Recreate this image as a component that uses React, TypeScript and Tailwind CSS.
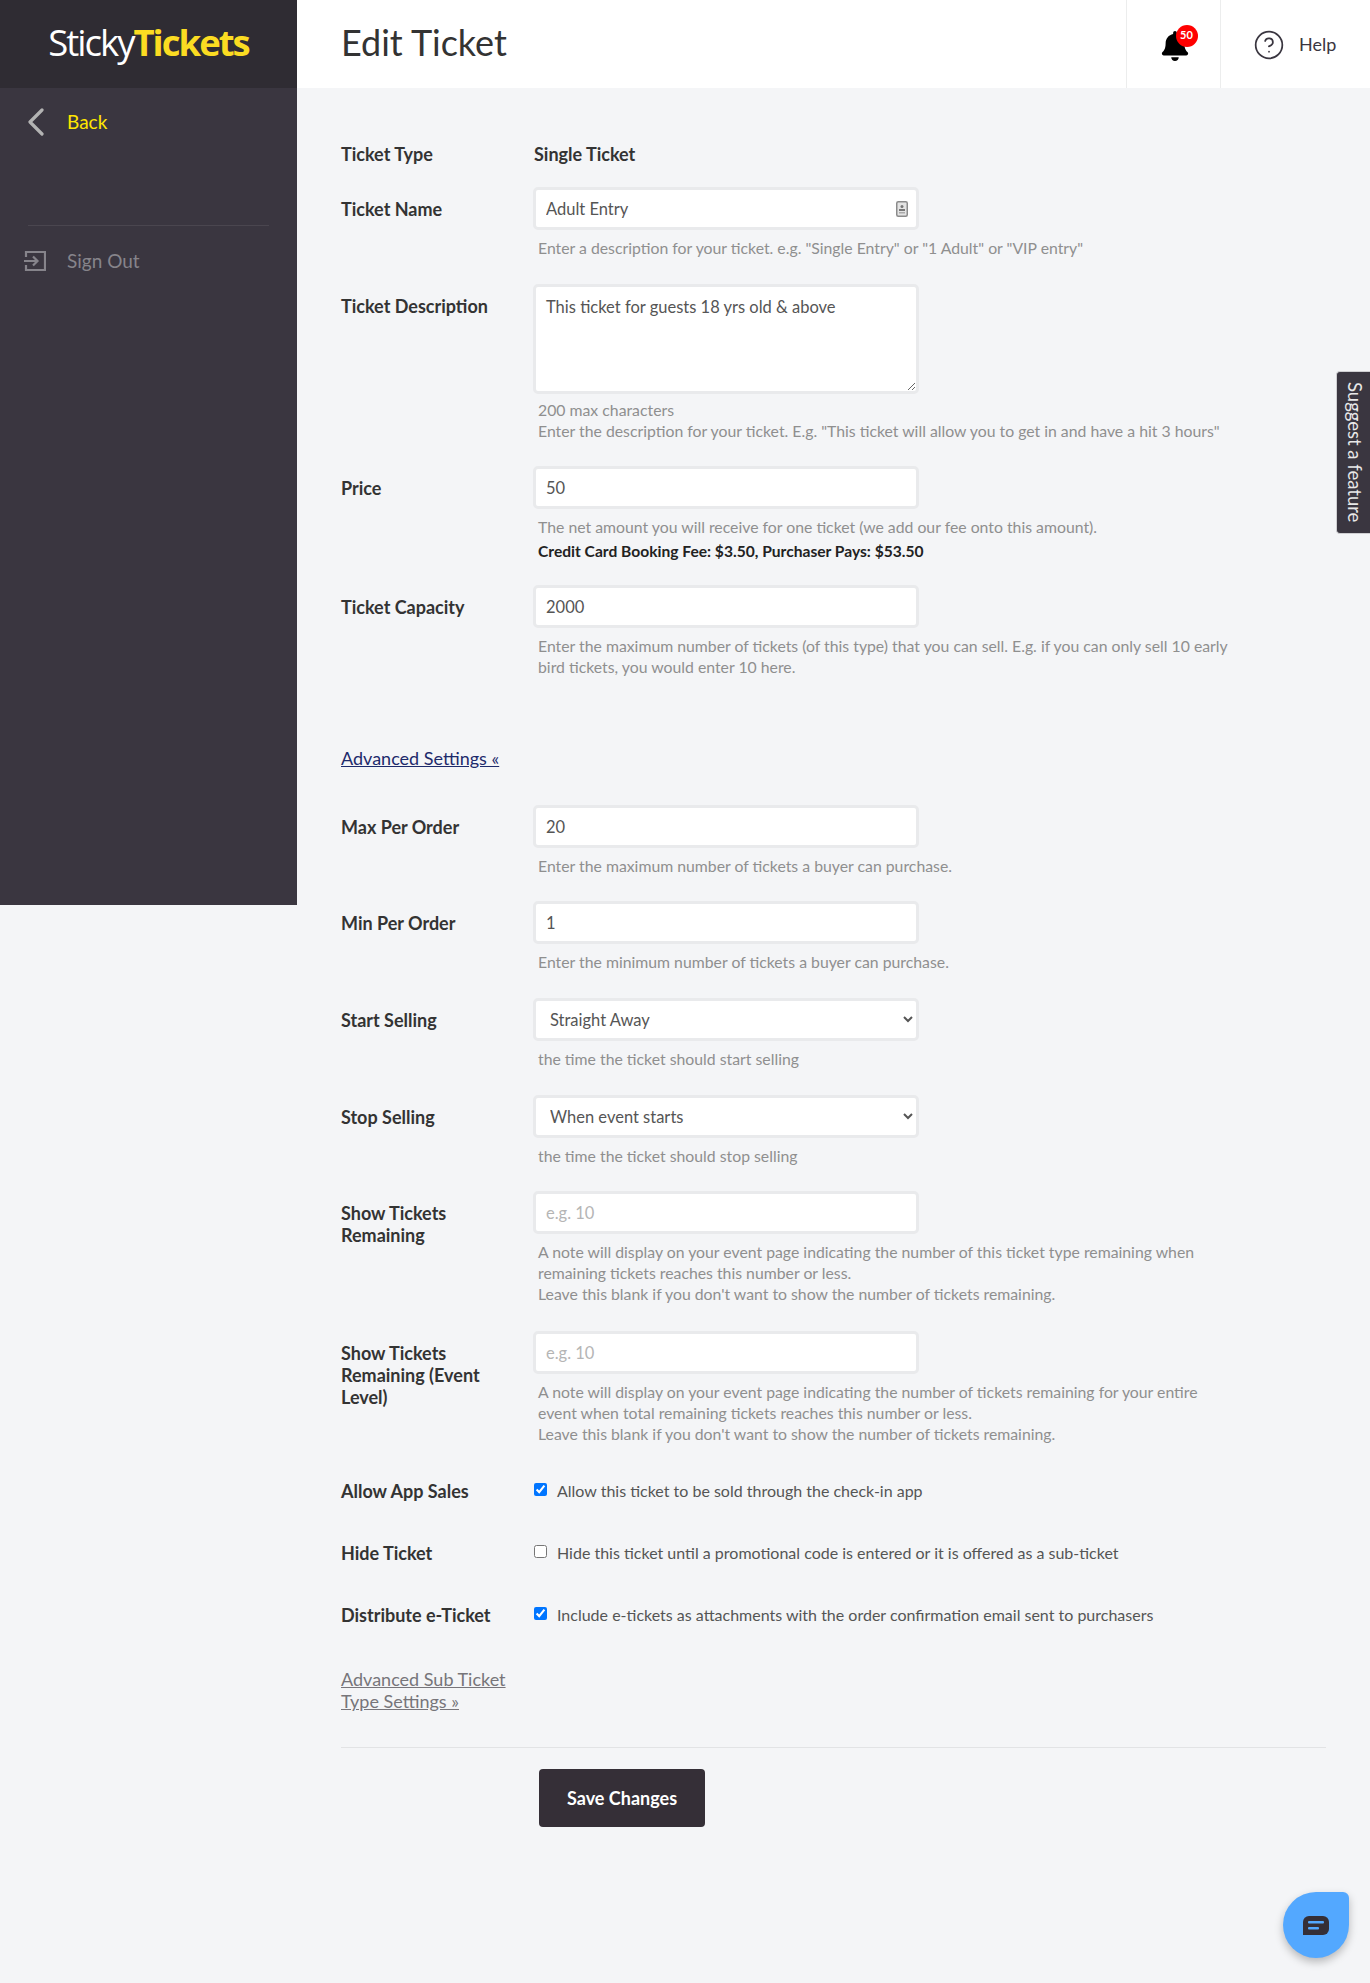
import { ReactNode } from "react";
import { FaBell } from "react-icons/fa";
import { CircleHelp } from "lucide-react";

const inputClass =
  "block w-[386px] h-[43px] border-[3px] border-[#e9eaec] rounded-[5px] bg-white px-[10px] text-[16.5px] text-[#555] placeholder:text-[#b5b5b5] outline-none";
const selectClass =
  "block w-[386px] h-[43px] border-[3px] border-[#e9eaec] rounded-[5px] bg-white pl-[10px] pr-1 text-[16.5px] text-[#555] outline-none";

function Help({ children, className = "pt-[7px]" }: { children: ReactNode; className?: string }) {
  return (
    <div className={`pl-[5px] text-[15.8px] leading-[21px] text-[#8f8f8f] whitespace-nowrap ${className}`}>
      {children}
    </div>
  );
}

function Row({ label, children, className = "" }: { label: ReactNode; children: ReactNode; className?: string }) {
  return (
    <div className={`flex items-start ${className}`}>
      <div className="w-[192px] shrink-0 pt-[11px] pr-4 text-[18px] leading-[22px] font-bold text-[#333]">{label}</div>
      <div className="flex-1">{children}</div>
    </div>
  );
}

function CheckRow({ label, text, checked, className = "" }: { label: string; text: string; checked: boolean; className?: string }) {
  return (
    <div className={`flex items-center h-[24px] ${className}`}>
      <div className="w-[193px] shrink-0 text-[18px] font-bold text-[#333]">{label}</div>
      <input type="checkbox" defaultChecked={checked} className="w-[13px] h-[13px] m-0 -translate-y-[2px] accent-[#0075ff]" />
      <span className="ml-[10px] text-[16px] text-[#555]">{text}</span>
    </div>
  );
}

export default function App() {
  return (
    <div className="relative flex min-h-[1983px] bg-[#f4f5f7] font-['Lato',sans-serif]">
      <aside className="w-[297px] shrink-0 self-start h-[905px] bg-[#3a3640]">
        <div className="h-[88px] pb-[3px] bg-[#2f2c33] flex items-center justify-center font-['Open_Sans',sans-serif] text-[36.5px] tracking-[-2px]">
          <span className="text-white">Sticky</span>
          <span className="font-bold text-[#fbdc22]">Tickets</span>
        </div>
        <div className="flex items-center h-[68px] pl-[27px]">
          <svg width="17" height="28" viewBox="0 0 17 28" fill="none" stroke="#b3b3b3" strokeWidth="3.2" strokeLinecap="round" strokeLinejoin="round">
            <path d="M15 2L3 14l12 12" />
          </svg>
          <span className="ml-[23px] text-[19px] text-[#ffe600]">Back</span>
        </div>
        <div className="mt-[69px] mx-[28px] border-t border-[#4a464f]" />
        <div className="flex items-center mt-[21px] pl-[24px]">
          <svg width="22" height="22" viewBox="0 0 22 22" fill="none" stroke="#86848b" strokeWidth="2.2">
            <path d="M2 7V2h19v18H2v-5" />
            <path d="M0 11h13M9 6.5l4.5 4.5L9 15.5" />
          </svg>
          <span className="ml-[21px] text-[19px] text-[#86848b]">Sign Out</span>
        </div>
      </aside>

      <main className="flex-1 min-w-0">
        <header className="h-[88px] bg-white flex items-stretch">
          <h1 className="flex-1 pl-[44px] pb-[4px] self-center text-[36px] text-[#333]">Edit Ticket</h1>
          <div className="w-[95px] border-l border-r border-[#eceded] flex items-center justify-center">
            <div className="relative ml-[2px]">
              <FaBell className="w-[28px] h-[30px] text-black mt-[3px]" />
              <span className="absolute -top-[3px] left-[15px] w-[22px] h-[22px] rounded-full bg-[#ff0000] text-white text-[11px] font-bold flex items-center justify-center">
                50
              </span>
            </div>
          </div>
          <div className="w-[149px] flex items-center pl-[32px] pt-[2px]">
            <CircleHelp className="w-[32px] h-[32px] text-[#3a3640]" strokeWidth={1.3} />
            <span className="ml-[14px] -mt-[2px] text-[18px] text-[#3a3640]">Help</span>
          </div>
        </header>

        <div className="pl-[44px] pr-[44px] pt-[54px]">
          <div className="flex items-center h-[24px] mb-[21px] text-[18px] font-bold text-[#333]">
            <div className="w-[193px]">Ticket Type</div>
            <div>Single Ticket</div>
          </div>

          <Row label="Ticket Name" className="mb-[26px]">
            <div className="relative w-[386px]">
              <input className={inputClass} defaultValue="Adult Entry" />
              <svg className="absolute right-[11px] top-[14px]" width="12" height="16" viewBox="0 0 12 16">
                <rect x="0.75" y="0.75" width="10.5" height="14.5" rx="1.5" fill="#e4e4e4" stroke="#8b8b8b" strokeWidth="1.5" />
                <circle cx="6" cy="5.5" r="1.5" fill="#777" />
                <rect x="3" y="8" width="6" height="2" fill="#777" />
                <rect x="3" y="11" width="6" height="1.5" fill="#aaa" />
              </svg>
            </div>
            <Help>Enter a description for your ticket. e.g. "Single Entry" or "1 Adult" or "VIP entry"</Help>
          </Row>

          <Row label="Ticket Description" className="mb-[25px]">
            <textarea
              className="block w-[386px] h-[110px] border-[3px] border-[#e9eaec] rounded-[5px] bg-white px-[10px] py-[9px] text-[16.5px] leading-[22px] text-[#555] outline-none"
              defaultValue="This ticket for guests 18 yrs old & above"
            />
            <Help className="pt-[5px]">
              200 max characters
              <br />
              Enter the description for your ticket. E.g. "This ticket will allow you to get in and have a hit 3 hours"
            </Help>
          </Row>

          <Row label="Price" className="mb-[23px]">
            <input className={inputClass} defaultValue="50" />
            <Help>The net amount you will receive for one ticket (we add our fee onto this amount).</Help>
            <div className="pl-[5px] pt-[4px] text-[15.6px] leading-[21px] font-bold text-[#222]">
              Credit Card Booking Fee: $3.50, Purchaser Pays: $53.50
            </div>
          </Row>

          <Row label="Ticket Capacity" className="mb-[69px]">
            <input className={inputClass} defaultValue="2000" />
            <Help>
              Enter the maximum number of tickets (of this type) that you can sell. E.g. if you can only sell 10 early
              <br />
              bird tickets, you would enter 10 here.
            </Help>
          </Row>

          <a href="#" className="block text-[18px] leading-[24px] text-[#1d2a6b] underline mb-[35px]">
            Advanced Settings «
          </a>

          <Row label="Max Per Order" className="mb-[25px]">
            <input className={inputClass} defaultValue="20" />
            <Help>Enter the maximum number of tickets a buyer can purchase.</Help>
          </Row>

          <Row label="Min Per Order" className="mb-[26px]">
            <input className={inputClass} defaultValue="1" />
            <Help>Enter the minimum number of tickets a buyer can purchase.</Help>
          </Row>

          <Row label="Start Selling" className="mb-[26px]">
            <select className={selectClass} defaultValue="Straight Away">
              <option>Straight Away</option>
            </select>
            <Help>the time the ticket should start selling</Help>
          </Row>

          <Row label="Stop Selling" className="mb-[25px]">
            <select className={selectClass} defaultValue="When event starts">
              <option>When event starts</option>
            </select>
            <Help>the time the ticket should stop selling</Help>
          </Row>

          <Row label={<>Show Tickets Remaining</>} className="mb-[27px]">
            <input className={inputClass} placeholder="e.g. 10" />
            <Help>
              A note will display on your event page indicating the number of this ticket type remaining when
              <br />
              remaining tickets reaches this number or less.
              <br />
              Leave this blank if you don't want to show the number of tickets remaining.
            </Help>
          </Row>

          <Row label={<>Show Tickets Remaining (Event Level)</>} className="mb-[35px]">
            <input className={inputClass} placeholder="e.g. 10" />
            <Help>
              A note will display on your event page indicating the number of tickets remaining for your entire
              <br />
              event when total remaining tickets reaches this number or less.
              <br />
              Leave this blank if you don't want to show the number of tickets remaining.
            </Help>
          </Row>

          <CheckRow className="mb-[38px]" label="Allow App Sales" text="Allow this ticket to be sold through the check-in app" checked />
          <CheckRow className="mb-[38px]" label="Hide Ticket" text="Hide this ticket until a promotional code is entered or it is offered as a sub-ticket" checked={false} />
          <CheckRow className="mb-[41px]" label="Distribute e-Ticket" text="Include e-tickets as attachments with the order confirmation email sent to purchasers" checked />

          <a href="#" className="block w-[180px] text-[18px] leading-[22px] text-[#77757a] underline">
            Advanced Sub Ticket Type Settings »
          </a>

          <div className="mt-[35px] border-t border-[#e2e3e5]" />

          <button className="block mt-[21px] ml-[198px] w-[166px] h-[58px] rounded-[4px] bg-[#352f37] text-white text-[18px] font-bold">
            Save Changes
          </button>
        </div>
      </main>

      <div className="absolute left-[1336px] top-[371px] w-[34px] h-[163px] pl-[2px] bg-[#3a3640] border-l border-t border-b border-[#cfcfd2] rounded-l-[4px] flex items-center justify-center text-[#e8e8e8] text-[18.5px] [writing-mode:vertical-rl]">
        Suggest a feature
      </div>

      <div className="absolute left-[1283px] top-[1892px] w-[66px] h-[66px] rounded-[33px] rounded-tr-[6px] bg-[#53a8ff] shadow-[0_4px_8px_rgba(0,0,0,0.25)] flex items-center justify-center">
        <svg width="26" height="19" viewBox="0 0 26 19">
          <path d="M6 0h14a6 6 0 0 1 6 6v7a6 6 0 0 1-6 6H0V6a6 6 0 0 1 6-6z" fill="#352f37" />
          <rect x="5" y="5" width="16" height="2.5" rx="1" fill="#53a8ff" />
          <rect x="5" y="11" width="11" height="2.5" rx="1" fill="#53a8ff" />
        </svg>
      </div>
    </div>
  );
}
